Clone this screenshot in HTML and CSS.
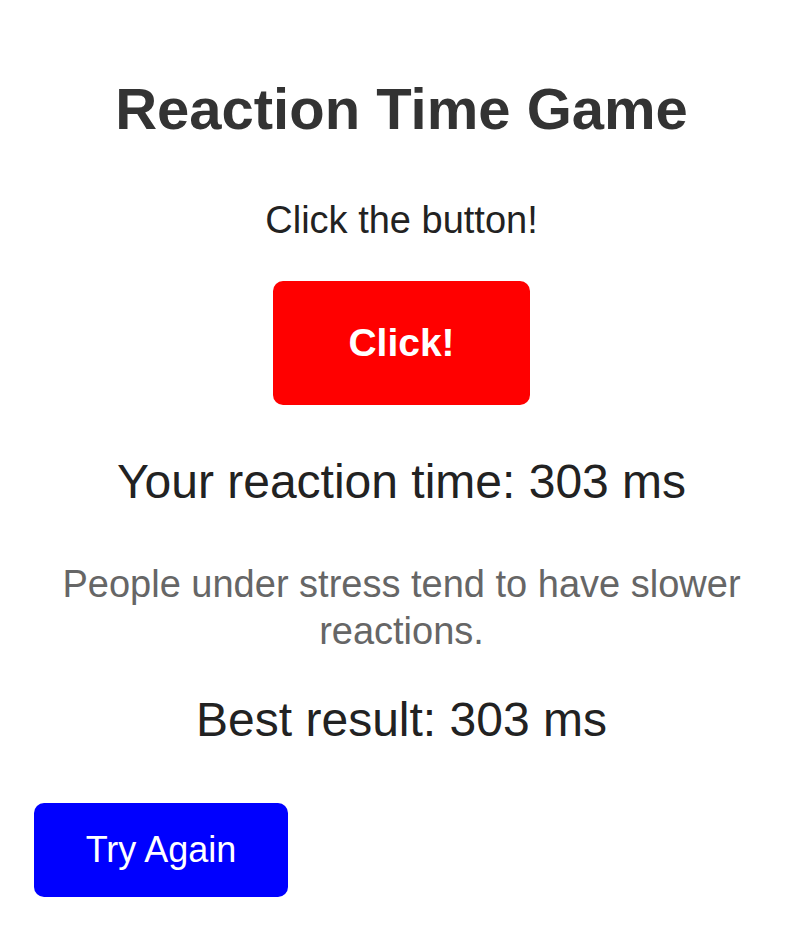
FILE: index.html
```html
<!DOCTYPE html>
<html lang="en">
<head>
    <meta charset="UTF-8">
    <meta name="viewport" content="width=device-width, initial-scale=1.0">
    <title>Reaction Time Game</title>
    <link rel="stylesheet" href="styles.css">
</head>
<body>
    <div class="game">
        <h1>Reaction Time Game</h1>
        <p class="status">Click the button!</p>
        <button class="click-btn">Click!</button>
        <p class="result">Your reaction time: 303 ms</p>
        <p class="fact">People under stress tend to have slower reactions.</p>
        <p class="best">Best result: 303 ms</p>
        <div class="controls">
            <button class="retry-btn">Try Again</button>
        </div>
    </div>
</body>
</html>
```

FILE: styles.css
```css
body {
    font-family: "Liberation Sans", Arial, sans-serif;
    margin: 0;
    background-color: #ffffff;
    color: #222;
}
.game {
    padding: 77px 25px 0 34px;
    text-align: center;
}
h1 {
    margin: 0;
    font-size: 58px;
    line-height: 64px;
    font-weight: bold;
    color: #333;
}
.status {
    margin: 57px 0 0;
    font-size: 38px;
    line-height: 44px;
    color: #222;
}
.click-btn {
    display: block;
    margin: 39px auto 0;
    width: 257px;
    height: 124px;
    background-color: #ff0000;
    color: white;
    border: none;
    border-radius: 10px;
    font-family: inherit;
    font-size: 39px;
    font-weight: bold;
    line-height: 44px;
    cursor: pointer;
}
.result {
    margin: 49px 0 0;
    font-size: 48px;
    line-height: 56px;
    color: #222;
}
.fact {
    margin: 51px 0 0;
    font-size: 38px;
    line-height: 47px;
    color: #666;
}
.best {
    margin: 37px 0 0;
    font-size: 48px;
    line-height: 56px;
    color: #222;
}
.controls {
    margin-top: 55px;
    text-align: left;
}
.retry-btn {
    width: 254px;
    height: 94px;
    background-color: #0000ff;
    color: white;
    border: none;
    border-radius: 10px;
    font-family: inherit;
    font-size: 36px;
    line-height: 42px;
    cursor: pointer;
}
```
